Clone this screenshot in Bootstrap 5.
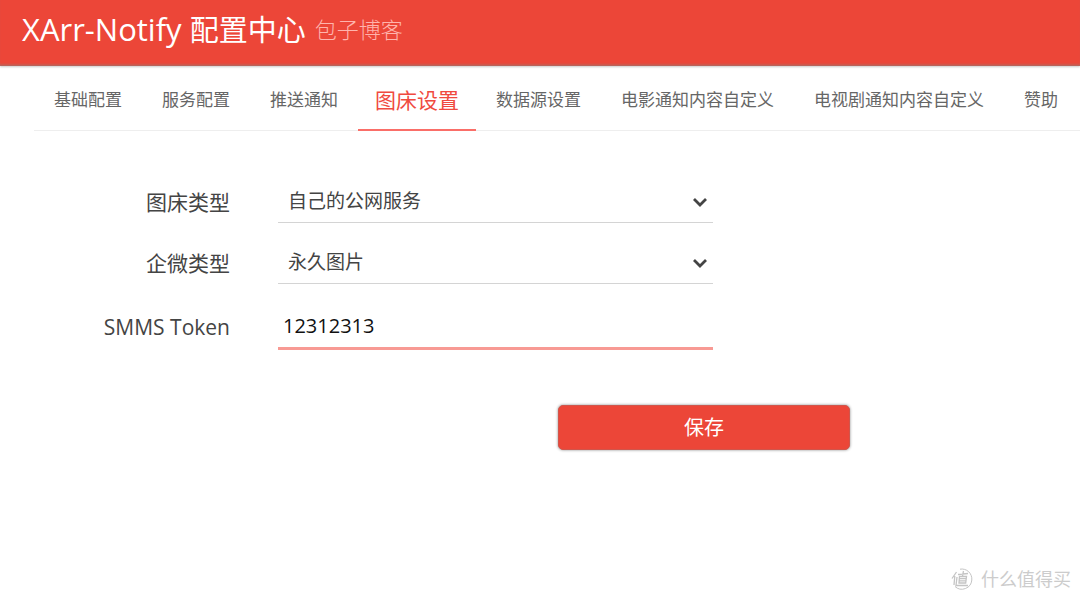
<!DOCTYPE html>
<html lang="zh-CN">
<head>
<meta charset="utf-8">
<meta name="viewport" content="width=device-width, initial-scale=1">
<title>XArr-Notify 配置中心</title>
<link href="https://cdn.jsdelivr.net/npm/bootstrap@5.3.0/dist/css/bootstrap.min.css" rel="stylesheet">
<style>
:root { --brand: #ec4638; }
body { font-family: "Open Sans", "Noto Sans CJK SC", sans-serif; color: #444; background: #fff; }
.topbar { background: var(--brand); height: 66px; padding: 0 22px 8px; box-shadow: inset 0 -3px 3px -2px #a0756f, 0 1px 2px #ccc; }
.topbar h1 { font-size: 29px; line-height: 40px; font-weight: 400; color: #fff; }
.topbar .latin { font-size: 31px; }
.topbar a { font-size: 22px; font-weight: 300; color: #ffb4ad; margin-left: 9px; }
.config-tabs { margin-left: 34px; border-bottom: 1px solid #eee; }
.config-tabs .nav-link { padding: 0 20px; height: 65px; line-height: 68px; font-size: 17px; color: #666; border-bottom: 2px solid transparent; margin-bottom: -1px; white-space: nowrap; }
.config-tabs .nav-link.active { padding: 0 17px; font-size: 21px; color: #f04a40; border-color: #fa6e68; }
.config-form { margin: 50px 16px 0 29px; }
.form-line { display: grid; grid-template-columns: 201px minmax(0, 42%); column-gap: 48px; align-items: center; margin-bottom: 19px; }
.form-line label { font-size: 21px; line-height: 30px; text-align: right; }
.line-field { border: 0; border-bottom: 1px solid #d4d4d4; border-radius: 0; padding: 0 10px; height: 42px; font-size: 19px; color: #444; background-color: transparent; }
.form-select.line-field { background-image: url("data:image/svg+xml,%3Csvg xmlns='http://www.w3.org/2000/svg' viewBox='0 0 14 10'%3E%3Cpath d='M1 2l6 6 6-6' fill='none' stroke='%23444' stroke-width='2.8'/%3E%3C/svg%3E"); background-size: 14px 10px; background-position: right 6px center; }
.form-control.line-field { border-bottom: 3px solid #f89a94; padding: 0 5px; height: 47px; font-size: 20px; color: #111; }
.btn-save { width: 292px; height: 45px; margin: 55px 0 0 529px; background: var(--brand); color: #fff; font-size: 20px; padding: 0; border: 1px solid #d0564c; border-radius: 5px; box-shadow: 0 0 3px #888; }
.btn-save:hover { background: #d93b2e; color: #fff; }
.watermark { color: #ccc; font-size: 18px; line-height: 24px; padding: 0 9px 10px; }
</style>
</head>
<body class="d-flex flex-column min-vh-100 overflow-x-hidden">
<header class="topbar d-flex align-items-center">
  <h1 class="m-0"><span class="latin">XArr-Notify </span>配置中心</h1>
  <a href="#" class="text-decoration-none">包子博客</a>
</header>
<nav class="config-tabs nav flex-nowrap" aria-label="配置">
  <a class="nav-link" href="#">基础配置</a>
  <a class="nav-link" href="#">服务配置</a>
  <a class="nav-link" href="#">推送通知</a>
  <a class="nav-link active" aria-current="page" href="#">图床设置</a>
  <a class="nav-link" href="#">数据源设置</a>
  <a class="nav-link" href="#">电影通知内容自定义</a>
  <a class="nav-link" href="#">电视剧通知内容自定义</a>
  <a class="nav-link" href="#">赞助</a>
</nav>
<main class="flex-grow-1">
  <form class="config-form">
    <div class="form-line">
      <label for="hostType">图床类型</label>
      <select id="hostType" class="form-select line-field"><option>自己的公网服务</option></select>
    </div>
    <div class="form-line">
      <label for="wecomType">企微类型</label>
      <select id="wecomType" class="form-select line-field"><option>永久图片</option></select>
    </div>
    <div class="form-line mb-0">
      <label for="token">SMMS Token</label>
      <input id="token" class="form-control line-field" type="text" value="12312313">
    </div>
    <button type="button" class="btn btn-save d-block">保存</button>
  </form>
</main>
<footer class="watermark d-flex justify-content-end align-items-center gap-2">
  <svg width="22" height="22" viewBox="0 0 22 22" fill="none" stroke="#c4c4c4" stroke-width="1.3" aria-hidden="true">
    <path d="M9 1.200A10 10 0 0 1 20.800 12A10 10 0 0 1 4 18.500" stroke-width="1"/>
    <path d="M5.500 4L1 10.500M3.800 8L3 17M7 6.500L17 5.500M12.500 3L11.500 8M8.500 8.500H15.500L14.700 15H8ZM8.500 10.700H15M8.300 12.900H14.800M6 9L5 17.500H17"/>
  </svg>
  <span>什么值得买</span>
</footer>
<script src="https://cdn.jsdelivr.net/npm/bootstrap@5.3.0/dist/js/bootstrap.bundle.min.js"></script>
</body>
</html>
